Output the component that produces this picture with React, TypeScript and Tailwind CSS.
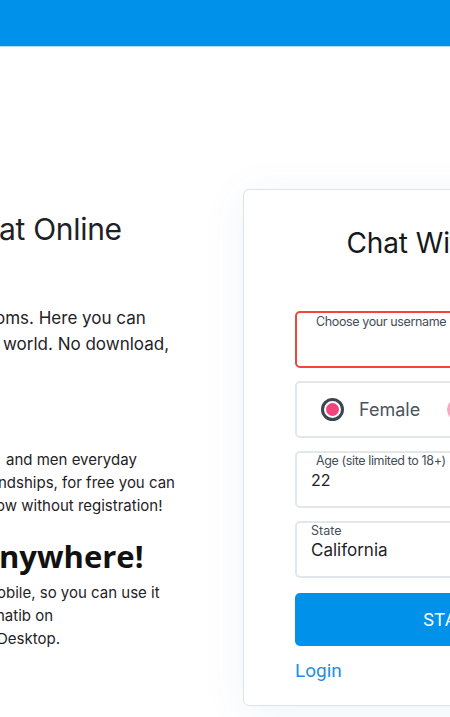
import React from "react";

const inter = { fontFamily: "Inter, 'Noto Sans', sans-serif" } as React.CSSProperties;

function Line({ children, className }: { children: React.ReactNode; className: string }) {
  return <div className={"whitespace-nowrap " + className}>{children}</div>;
}

export default function App() {
  return (
    <div className="relative h-[717px] w-[450px] overflow-hidden bg-white font-['Inter',sans-serif]">
      <header className="h-[46px] w-full bg-[#0091ea] shadow-[0_1px_0_#b5def8]" />
      <main className="flex flex-row">
        <section className="w-[243px] shrink-0 flex flex-col text-[#1e2125]">
          <Line className="mt-[165px] -ml-[1px] text-[30px] leading-[36px] tracking-[-0.01em]">at Online</Line>
          <div className="mt-[58px] text-[17px] leading-[26px] text-[#1f2226]">
            <Line className="-ml-[5px]">oms. Here you can</Line>
            <Line className="ml-[3px]">world. No download,</Line>
            <Line className="h-[26px]">{" "}</Line>
          </div>
          <div className="mt-[65px] text-[15px] leading-[23px] text-[#1f2226]">
            <Line className="ml-[6px]">and men everyday</Line>
            <Line className="-ml-[2px]">ndships, for free you can</Line>
            <Line className="-ml-[4px]">ow without registration!</Line>
          </div>
          <Line className="mt-[20px] -ml-[1px] font-['Open_Sans',sans-serif] text-[31px] font-bold leading-[38px] text-[#111]">
            nywhere!
          </Line>
          <div className="mt-[6px] text-[15px] leading-[23px] text-[#1f2226]">
            <Line className="-ml-[3px]">obile, so you can use it</Line>
            <Line className="-ml-[4px]">hatib on</Line>
            <Line className="-ml-[3px]">Desktop.</Line>
          </div>
        </section>

        <section className="mt-[143px] w-[468px] h-[517px] shrink-0 rounded-[6px] border border-[#dbe4e8] bg-white px-[51px] pt-[36px] shadow-[0_6px_40px_rgba(40,110,180,0.08)]">
          <h1 className="whitespace-nowrap text-center text-[28px] leading-[34px] tracking-[-0.004em] text-[#16181b]" style={inter}>
            Chat With Someone
          </h1>
          <div className="mt-[51px] flex flex-col gap-[13px]">
            <div className="relative h-[57px] rounded-[5px] border-2 border-[#f4453b]">
              <div className="whitespace-nowrap pl-[19px] pt-[1px] text-[12.5px] leading-[16px] tracking-[-0.03em] text-[#444e58]">Choose your username</div>
            </div>
            <div className="flex h-[57px] items-center rounded-[5px] border-2 border-[#e1e7ea] pl-[24px]">
              <span className="flex h-[23px] w-[23px] items-center justify-center rounded-full border-[3px] border-[#3a4650]">
                <span className="h-[13px] w-[13px] rounded-full bg-[#f0447a]" />
              </span>
              <span className="ml-[15px] text-[18px] text-[#49545e]">Female</span>
              <span className="ml-[27px] flex h-[23px] w-[23px] items-center justify-center rounded-full border-[3px] border-[#f6a9c2] bg-[#fce4ec]">
                <span className="h-[13px] w-[13px] rounded-full bg-[#f0447a]" />
              </span>
              <span className="ml-[15px] text-[18px] text-[#49545e]">Male</span>
            </div>
            <div className="h-[57px] rounded-[5px] border-2 border-[#e1e7ea]">
              <div className="whitespace-nowrap pl-[19px] text-[12.5px] leading-[15px] tracking-[-0.03em] text-[#444e58]">Age (site limited to 18+)</div>
              <div className="pl-[14px] pt-[2px] text-[16px] leading-[20px] text-[#1f2226]">22</div>
            </div>
            <div className="h-[57px] rounded-[5px] border-2 border-[#e1e7ea]">
              <div className="pl-[14px] text-[12.5px] leading-[15px] text-[#444e58]">State</div>
              <div className="pl-[14px] pt-[2px] text-[17px] leading-[20px] text-[#1f2226]">California</div>
            </div>
          </div>
          <button className="mt-[15px] flex h-[53px] w-full items-center justify-center rounded-[5px] bg-[#0091ea] font-['Roboto',sans-serif] text-[18px] tracking-[0.02em] text-white">
            START CHAT
          </button>
          <div className="mt-[13px] font-['Roboto',sans-serif] text-[19px] leading-[24px] text-[#1e8ee8]">Login</div>
        </section>
      </main>
    </div>
  );
}
